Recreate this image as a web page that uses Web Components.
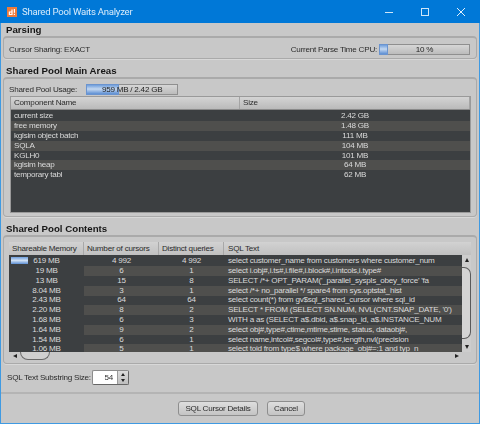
<!DOCTYPE html>
<html>
<head>
<meta charset="utf-8">
<title>Shared Pool Waits Analyzer</title>
<style>
html, body { margin: 0; padding: 0; background: #c8c8c8; }
body { width: 480px; height: 424px; overflow: hidden; font: 8.1px "Liberation Sans", Arial, sans-serif; letter-spacing: -.24px; color: #2b2b2b; }
</style>
</head>
<body>

<app-window>
  <title-bar slot="title">Shared Pool Waits Analyzer</title-bar>

  <section-panel heading="Parsing" height="23">
    <div style="display:flex;align-items:center;justify-content:space-between;height:100%;box-sizing:border-box;padding:2px 6px 0 5px">
      <span>Cursor Sharing: EXACT</span>
      <span style="display:flex;align-items:center;gap:2px">Current Parse Time CPU:
        <pool-meter value="10" width="91" label="10 %"></pool-meter></span>
    </div>
  </section-panel>

  <section-panel heading="Shared Pool Main Areas" height="140">
    <div style="display:flex;align-items:center;gap:9px;padding:5px 6px 1px 5px">
      <span>Shared Pool Usage:</span>
      <pool-meter value="37" width="92" label="959 MB / 2.42 GB"></pool-meter>
    </div>
    <areas-table></areas-table>
  </section-panel>

  <section-panel heading="Shared Pool Contents" height="129">
    <contents-table></contents-table>
  </section-panel>

  <div style="display:flex;align-items:center;padding:1px 0 0 4px">
    <span style="width:85px;white-space:nowrap">SQL Text Substring Size:</span>
    <spin-box value="54"></spin-box>
  </div>

  <div slot="footer" style="display:flex;justify-content:center;gap:9px;padding-left:3px">
    <swing-button style="width:80px">SQL Cursor Details</swing-button>
    <swing-button style="width:38px">Cancel</swing-button>
  </div>
</app-window>

<script>
// window frame with a title and a button footer
class AppWindow extends HTMLElement {
  constructor() {
    super();
    this.attachShadow({ mode: 'open' });
    this.shadowRoot.innerHTML = `
      <style>
        :host { display: flex; flex-direction: column; width: 480px; height: 424px; box-sizing: border-box; background: #c8c8c8;
                border: 1px solid #3f9ae2; border-top: 0; }
        .main { flex: 1; padding: 0 2px; min-height: 0; filter: blur(.3px); }
        .foot { height: 31px; box-sizing: border-box; border-top: 2px solid #b4b4b4; padding-top: 7px; filter: blur(.3px); }
      </style>
      <slot name="title"></slot>
      <div class="main"><slot></slot></div>
      <div class="foot"><slot name="footer"></slot></div>`;
  }
}

class TitleBar extends HTMLElement {
  constructor() {
    super();
    this.attachShadow({ mode: 'open' });
    this.shadowRoot.innerHTML = `
      <style>
        :host { display: flex; align-items: center; height: 23px; margin: 0 -1px; background: #0078d7; color: #d8ecfb;
                font: 9.6px Roboto, sans-serif; letter-spacing: -.25px; flex: none; }
        .logo { width: 10px; height: 10px; margin: 0 5px 0 7px; display: block; }
        .txt { flex: 1; filter: blur(.25px); }
        .ctl { width: 36px; height: 23px; display: flex; align-items: center; justify-content: center; }
        svg { display: block; }
      </style>
      <svg class="logo" viewBox="0 0 10 10">
        <rect width="10" height="10" fill="#ee7b3c"/>
        <path d="M5 2.5v5H2.4V5H5" fill="none" stroke="#fff" stroke-width="1.2"/>
        <rect x="6.8" y="2" width="1.2" height="3.8" fill="#fff"/><rect x="6.8" y="6.8" width="1.2" height="1.2" fill="#fff"/>
      </svg>
      <span class="txt"><slot></slot></span>
      <span class="ctl"><svg width="10" height="10" viewBox="0 0 10 10"><path d="M1 5.5h8" stroke="#cfe6f8"/></svg></span>
      <span class="ctl"><svg width="10" height="10" viewBox="0 0 10 10"><rect x="1.5" y="1.5" width="7" height="7" fill="none" stroke="#cfe6f8"/></svg></span>
      <span class="ctl" style="margin-right:1px"><svg width="10" height="10" viewBox="0 0 10 10"><path d="M1 1l8 8M9 1l-8 8" stroke="#e2f0fb"/></svg></span>`;
  }
}

// titled group with a rounded etched border
class SectionPanel extends HTMLElement {
  constructor() {
    super();
    this.attachShadow({ mode: 'open' });
    const h = this.getAttribute('height');
    this.shadowRoot.innerHTML = `
      <style>
        :host { display: block; margin-bottom: 5px; }
        h2 { margin: 0; padding: 0 0 0 3px; height: 13px; font: bold 9.7px/14px "Liberation Sans", Arial, sans-serif; letter-spacing: 0; color: #161616; }
        .box { height: ${h}px; box-sizing: border-box; border: 1px solid #aaa; border-top-width: 2px; border-radius: 4px;
               box-shadow: 0 1px 0 #d8d8d8; position: relative; }
      </style>
      <h2>${this.getAttribute('heading')}</h2>
      <div class="box"><slot></slot></div>`;
  }
}

class PoolMeter extends HTMLElement {
  constructor() {
    super();
    this.attachShadow({ mode: 'open' });
    const w = this.getAttribute('width');
    this.shadowRoot.innerHTML = `
      <style>
        :host { display: inline-block; width: ${w}px; height: 11px; position: relative; box-sizing: border-box; flex: none;
                border: 1px solid #8f8f8f; background: linear-gradient(#d6d6d6, #bcbcbc); text-align: center; line-height: 9px; color: #1e1e1e; }
        .fill { position: absolute; left: -1px; top: -1px; bottom: -1px; width: ${this.getAttribute('value')}%;
                background: linear-gradient(#6f9edc, #c4d8f0 45%, #5d8fd4); border: 1px solid #6b94cf; box-sizing: border-box; }
        span { position: relative; }
      </style>
      <div class="fill"></div><span>${this.getAttribute('label')}</span>`;
  }
}

class AreasTable extends HTMLElement {
  constructor() {
    super();
    this.attachShadow({ mode: 'open' });
    const rows = [['current size','2.42 GB'],['free memory','1.48 GB'],['kglsim object batch','111 MB'],['SQLA','104 MB'],
                  ['KGLH0','101 MB'],['kglsim heap','64 MB'],['temporary tabl','62 MB']];
    this.shadowRoot.innerHTML = `
      <style>
        :host { display: block; margin: 0 5px 0 6px; border: 1px solid #9a9a9a; }
        .head { display: grid; grid-template-columns: 229px 1fr; height: 12px; background: linear-gradient(#d4d4d4, #bababa); line-height: 12px; border-bottom: 1px solid #8a8a8a; }
        .head div { padding-left: 3px; border-right: 1px solid #a4a4a4; }
        .body { height: 100.8px; padding-top: 1.2px; background: #3c3f41; color: #dadada; }
        .row { display: grid; grid-template-columns: 229px 1fr; height: 9.85px; line-height: 10px; }
        .row:nth-child(even) { background: #4f4f4d; }
        .row div:first-child { padding-left: 3px; }
        .row div:last-child { text-align: center; }
      </style>
      <div class="head"><div>Component Name</div><div>Size</div></div>
      <div class="body">${rows.map(r => `<div class="row"><div>${r[0]}</div><div>${r[1]}</div></div>`).join('')}</div>`;
  }
}

class ContentsTable extends HTMLElement {
  constructor() {
    super();
    this.attachShadow({ mode: 'open' });
    const rows = [
      ['619 MB','4 992','4 992','select customer_name from customers where customer_num'],
      ['19 MB','6','1','select i.obj#,i.ts#,i.file#,i.block#,i.intcols,i.type#'],
      ['13 MB','15','8',"SELECT /*+ OPT_PARAM('_parallel_syspls_obey_force' 'fa"],
      ['8.04 MB','3','1','select /*+ no_parallel */ spare4 from sys.optstat_hist'],
      ['2.43 MB','64','64','select count(*) from gv$sql_shared_cursor where sql_id'],
      ['2.20 MB','8','2',"SELECT * FROM (SELECT SN.NUM, NVL(CNT.SNAP_DATE, '0')"],
      ['1.68 MB','6','3','WITH a as (SELECT a$.dbid, a$.snap_id, a$.INSTANCE_NUM'],
      ['1.64 MB','9','2','select obj#,type#,ctime,mtime,stime, status, dataobj#,'],
      ['1.54 MB','6','1','select name,intcol#,segcol#,type#,length,nvl(precision'],
      ['1.06 MB','5','1','select toid from type$ where package_obj#=:1 and typ_n']
    ];
    const cols = '75px 75px 65px 1fr';
    this.shadowRoot.innerHTML = `
      <style>
        :host { display: block; margin: 5px 5px 0 5px; position: relative; height: 120px; overflow: hidden; }
        .head { display: grid; grid-template-columns: ${cols}; height: 13px; line-height: 13px; background: linear-gradient(#d2d2d2, #c0c0c0); width: 463px; }
        .head div { padding-left: 3px; border-right: 1px solid #a8a8a8; white-space: nowrap; }
        .head div:last-child { border-right: 0; padding-left: 4px; }
        .view { height: 97px; width: 453px; overflow: hidden; background: #3c3f41; color: #dadada; }
        .row { display: grid; grid-template-columns: ${cols}; height: 9.8px; line-height: 10px; text-align: center; position: relative; top: 1.2px; }
        .row:nth-child(even) > div:not(:first-child) { background: #4f4f4d; }
        .m { position: relative; }
        .s { text-align: left; padding-left: 4px; white-space: nowrap; overflow: hidden; }
        .bar { position: absolute; left: 2px; top: 1px; width: 17px; height: 7px; background: linear-gradient(#6f9edc, #cfe0f4 50%, #5d8fd4); }
        .hbar { position: absolute; left: 0; width: 453px; top: 110px; height: 10px; background: #c8c8c8; }
        .vbar { position: absolute; left: 453px; width: 10px; top: 13px; height: 97px; background: #cdcdcd; }
        .thumb-v { position: absolute; left: 0; width: 9px; top: 12px; height: 72px; border: 1px solid #5a5a5a; border-left: 0; border-radius: 0 7px 7px 0; box-sizing: border-box; background: #d4d4d4; }
        .thumb-h { position: absolute; left: 11px; width: 30px; top: 0; height: 8px; border: 1px solid #6a6a6a; border-top: 0; border-radius: 0 0 8px 8px; box-sizing: border-box; background: #d0d0d0; }
        .a { position: absolute; width: 0; height: 0; border-style: solid; border-color: transparent; }
      </style>
      <div class="head"><div>Shareable Memory</div><div>Number of cursors</div><div>Distinct queries</div><div>SQL Text</div></div>
      <div class="view">${rows.map((r, i) => `<div class="row"><div class="m">${i === 0 ? '<div class="bar"></div>' : ''}${r[0]}</div><div>${r[1]}</div><div>${r[2]}</div><div class="s">${r[3]}</div></div>`).join('')}</div>
      <div class="vbar">
        <div class="thumb-v"></div>
        <div class="a" style="left:3px;top:3px;border-width:0 2px 4px;border-bottom-color:#222"></div>
        <div class="a" style="left:3px;bottom:3px;border-width:4px 2px 0;border-top-color:#222"></div>
      </div>
      <div class="hbar">
        <div class="thumb-h"></div>
        <div class="a" style="left:4px;top:2px;border-width:2px 4px 2px 0;border-right-color:#222"></div>
        <div class="a" style="right:3px;top:2px;border-width:2px 0 2px 4px;border-left-color:#222"></div>
      </div>`;
  }
}

class SpinBox extends HTMLElement {
  constructor() {
    super();
    this.attachShadow({ mode: 'open' });
    this.shadowRoot.innerHTML = `
      <style>
        :host { display: inline-flex; width: 37px; height: 15px; box-sizing: border-box; border: 1px solid #8c8c8c; border-right-color: #666; border-bottom-color: #666; border-radius: 2px; background: #fff; flex: none; }
        .v { flex: 1; text-align: right; padding-right: 4px; line-height: 13px; color: #333; }
        .b { width: 10px; display: grid; grid-template-rows: 1fr 1fr; background: linear-gradient(#dcdcdc, #bebebe); border-left: 1px solid #9a9a9a; }
        .b div { display: flex; align-items: center; justify-content: center; }
        i { display: block; width: 0; height: 0; border-style: solid; border-color: transparent; }
      </style>
      <div class="v">${this.getAttribute('value')}</div>
      <div class="b"><div><i style="border-width:0 2px 3px;border-bottom-color:#222"></i></div><div><i style="border-width:3px 2px 0;border-top-color:#222"></i></div></div>`;
  }
}

class SwingButton extends HTMLElement {
  constructor() {
    super();
    this.attachShadow({ mode: 'open' });
    this.shadowRoot.innerHTML = `
      <style>
        :host { display: inline-block; box-sizing: border-box; height: 15px; line-height: 13px; text-align: center; border: 1px solid #8e8e8e; border-radius: 3px;
                background: linear-gradient(#dedede, #c4c4c4); color: #2b2b2b; }
      </style>
      <slot></slot>`;
  }
}

customElements.define('app-window', AppWindow);
customElements.define('title-bar', TitleBar);
customElements.define('section-panel', SectionPanel);
customElements.define('pool-meter', PoolMeter);
customElements.define('areas-table', AreasTable);
customElements.define('contents-table', ContentsTable);
customElements.define('spin-box', SpinBox);
customElements.define('swing-button', SwingButton);
</script>
</body>
</html>
